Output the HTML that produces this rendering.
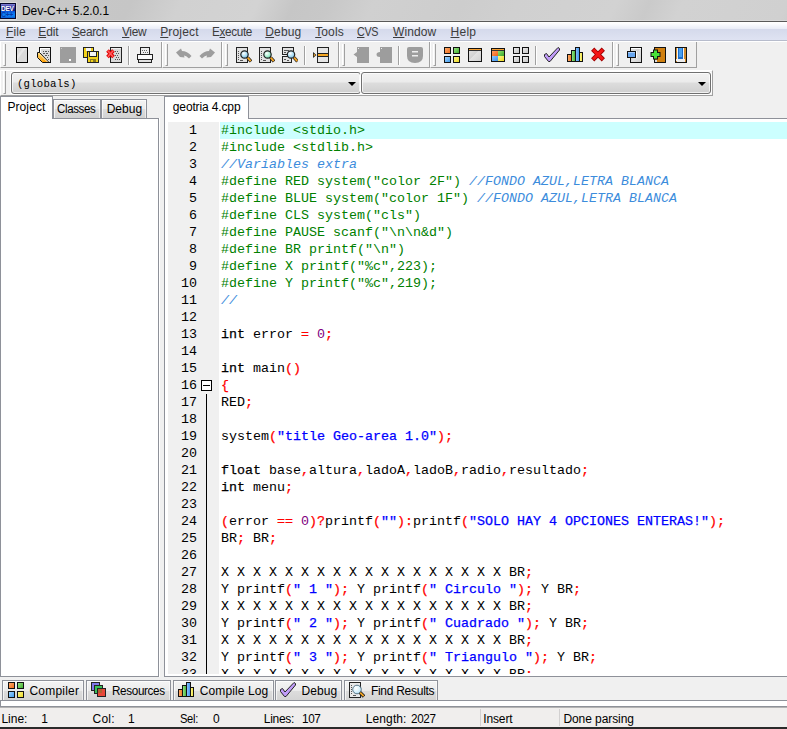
<!DOCTYPE html>
<html><head><meta charset="utf-8"><title>Dev-C++ 5.2.0.1</title>
<style>
*{box-sizing:border-box;margin:0;padding:0}
html,body{width:787px;height:729px;overflow:hidden;background:#f0f0f0}
body{position:relative;font-family:"Liberation Sans",sans-serif;font-size:12px;color:#000}
.abs{position:absolute}
.lb{position:absolute;white-space:nowrap;line-height:14px;height:14px;font-size:12px;transform-origin:0 0}
.lb u{text-decoration:underline;text-underline-offset:1px;text-decoration-thickness:1px}
#titlebar{position:absolute;left:0;top:0;width:787px;height:21px;background:linear-gradient(115deg,#c9c9c9 0px,#c6c6c6 120px,#d1d1d1 165px,#d3d3d3 235px,#c6c6c6 268px,#c8c8c8 300px,#d0d0d0 340px,#cdcdcd 420px,#d0d0d0 470px,#d2d2d2 560px,#cacaca 590px,#d2d2d2 620px,#d0d0d0 715px,#c4c4c4 755px,#c6c6c6 790px)}
#logo{position:absolute;left:0;top:3px;width:16px;height:16px;background:linear-gradient(#8a88d8 0,#4a4cb0 2px,#1a2488 5px,#101870 7px);border:1px solid #06082e;overflow:hidden;box-shadow:0 0 0 1px rgba(255,255,255,0.350)}
#logo span{position:absolute;left:0px;top:1px;font-size:6.500px;font-weight:bold;color:#fff;line-height:7px;letter-spacing:-0.300px}
#logo i{position:absolute;left:0px;top:7px;width:14px;height:7px;background:linear-gradient(#0a50d8 0,#0c80f4 3px,#0c80f4 5px,#0a58d0 7px);font-style:normal;font-size:7px;line-height:7px;color:#0838a8;font-weight:bold;letter-spacing:-0.500px}
#tline0{position:absolute;left:0;top:20px;width:787px;height:1px;background:#d9d9d9}
#tline{position:absolute;left:0;top:21px;width:787px;height:1px;background:#5a5a5a}
#menu{position:absolute;left:0;top:22px;width:787px;height:20px;background:linear-gradient(#ffffff 0,#ffffff 1px,#fbfcfe 2px,#e9ecf7 7px,#d5daec 7.500px,#dfe3f2 18px,#b7bccc 18px,#b7bccc 19px,#ffffff 19px,#ffffff 20px)}
.ic{position:absolute;width:16px;height:16px;line-height:0}
.tbox{position:absolute;border-right:1px solid #a0a0a0;border-bottom:1px solid #a0a0a0;border-left:1px solid #fff}
.grip{position:absolute;width:3px;border-left:1px solid #fff;border-right:1px solid #a0a0a0;border-bottom:1px solid #a0a0a0}
.vsep{position:absolute;width:2px;border-left:1px solid #a0a0a0;border-right:1px solid #fff}
.combo{position:absolute;height:22px;border:1px solid #707070;border-radius:3px;background:linear-gradient(#f2f2f2 0,#ebebeb 9px,#dddddd 10px,#cfcfcf 100%);box-shadow:inset 0 0 0 1px rgba(255,255,255,0.700),0 0 0 1px #fff;font-family:"Liberation Mono",monospace;font-size:10.667px;line-height:22px;padding-left:5px;letter-spacing:0.220px}
.combo:after{content:"";position:absolute;right:4px;top:9px;border:4px solid transparent;border-top:4px solid #000;border-bottom:0}
.tab{position:absolute;border:1px solid #8e9199;border-bottom:0;background:linear-gradient(#f4f4f4 0,#ebebeb 50%,#dddddd 51%,#d2d2d2 100%);box-shadow:inset 1px 1px 0 rgba(255,255,255,0.700),inset -1px 0 0 rgba(255,255,255,0.500)}
.tab.sel{background:#fff}
#left{position:absolute;left:0;top:118px;width:159px;height:559px;background:#fff;border:1px solid #8e9199;box-shadow:1px 0 0 #fff}
#edwrap{position:absolute;left:164px;top:118px;width:640px;height:559px;background:#fff;border:1px solid #8e9199}
#gutter{position:absolute;left:168px;top:122px;width:51px;height:552px;background:#f0f0f0;overflow:hidden}
#nums{position:absolute;left:168px;top:122px;width:29px;height:552px;overflow:hidden;text-align:right;font-family:"Liberation Mono",monospace;font-size:13.333px;line-height:17px}
#code{position:absolute;left:220px;top:122px;width:567px;height:552px;overflow:hidden;font-family:"Liberation Mono",monospace;font-size:13.333px;line-height:17px;white-space:pre;padding-left:1px}
#hl{position:absolute;left:220px;top:122px;width:567px;height:17px;background:#ccffff}
.ln{height:17px}
.p{color:#008000}
.c{color:#3c8cdc;font-style:italic}
.k{-webkit-text-stroke:0.250px #000}
.s{color:#0000ff;-webkit-text-stroke:0.250px #0000ff}
.y{color:#ff0000;-webkit-text-stroke:0.250px #ff0000}
.n{color:#800080}
#fold{position:absolute;left:201px;top:380px;width:11px;height:11px;border:1px solid #000;background:#fff}
#fold:after{content:"";position:absolute;left:1px;top:4px;width:7px;height:1px;background:#000}
#foldline{position:absolute;left:206px;top:394px;width:1px;height:280px;background:#000}
.btab{position:absolute;top:680px;height:20px;border:1px solid #8e9199;border-bottom:0;background:linear-gradient(#f4f4f4 0,#ebebeb 50%,#dddddd 51%,#d4d4d4 100%);box-shadow:inset 1px 1px 0 rgba(255,255,255,0.700),inset -1px 0 0 rgba(255,255,255,0.500)}
#bl1{position:absolute;left:0;top:700px;width:787px;height:1px;background:#8e9199}
#bw{position:absolute;left:0;top:701px;width:787px;height:5px;background:#fff;border-left:1px solid #8e9199}
#bl2{position:absolute;left:0;top:706px;width:787px;height:1px;background:#8e9199}
#bl3{position:absolute;left:0;top:707px;width:787px;height:1px;background:#b4b4b4}
#status{position:absolute;left:0;top:708px;width:787px;height:19px;background:#f0eeed}
#bot{position:absolute;left:0;top:727px;width:787px;height:2px;background:#2a2a2a}
.ssep{position:absolute;top:709px;width:1px;height:17px;background:#d2d0d0}
</style></head><body>
<div id="titlebar"><div id="logo"><span>DEV</span><i>C++</i></div></div>
<div id="tline0"></div><div id="tline"></div>
<div id="menu"></div>
<div class="tbox" style="left:0px;top:42px;width:162px;height:26px"></div><div class="grip" style="left:3px;top:44px;height:22px"></div><div class="tbox" style="left:162px;top:42px;width:60px;height:26px"></div><div class="grip" style="left:165px;top:44px;height:22px"></div><div class="tbox" style="left:222px;top:42px;width:117px;height:26px"></div><div class="grip" style="left:225px;top:44px;height:22px"></div><div class="tbox" style="left:339px;top:42px;width:91px;height:26px"></div><div class="grip" style="left:342px;top:44px;height:22px"></div><div class="tbox" style="left:430px;top:42px;width:183px;height:26px"></div><div class="grip" style="left:433px;top:44px;height:22px"></div><div class="tbox" style="left:613px;top:42px;width:84px;height:26px"></div><div class="grip" style="left:616px;top:44px;height:22px"></div><div class="vsep" style="left:128px;top:46px;height:19px"></div><div class="vsep" style="left:304px;top:46px;height:19px"></div><div class="vsep" style="left:398px;top:46px;height:19px"></div><div class="vsep" style="left:535px;top:46px;height:19px"></div>
<div class="ic" style="left:14px;top:47px"><svg width="16" height="16" viewBox="0 0 16 16" shape-rendering="crispEdges"><rect x="2.500" y="0.500" width="11" height="15" fill="#d9d9d9" stroke="#000"/><path d="M3 9 L9 1 L12 1 L3 13Z" fill="#e6e6e6" shape-rendering="auto"/></svg></div><div class="ic" style="left:37px;top:47px"><svg width="16" height="16" viewBox="0 0 16 16" shape-rendering="crispEdges"><defs><linearGradient id="og" x1="0" y1="0" x2="0.600" y2="1"><stop offset="0" stop-color="#ffd870"/><stop offset="1" stop-color="#ff9c00"/></linearGradient></defs><path d="M2.500 5.500 V0.500 H13.500 V15.500 H10" fill="#dcdcdc" stroke="#111"/><rect x="3" y="1" width="10" height="1" fill="#fff"/><rect x="3" y="1" width="1" height="5" fill="#fff"/><path d="M6 4h1M8 4h2M11 4h1M6 6h2M9 6h2M8 8h2M11 8h1M10 10h1M11 12h1" stroke="#555" fill="none"/><path d="M0.500 5.500 H2.500 L12 15.500 H5.500 L0.500 10.500 Z" fill="url(#og)" stroke="#111" shape-rendering="auto"/><path d="M2 6.500 L10.500 15" stroke="#fff3c8" stroke-width="1" shape-rendering="auto"/></svg></div><div class="ic" style="left:60px;top:47px"><svg width="16" height="16" viewBox="0 0 16 16" shape-rendering="crispEdges"><rect x="0" y="0" width="16" height="16" fill="#9d9d9d"/><rect x="9" y="12" width="2" height="2" fill="#fff"/><rect x="1" y="1" width="1" height="1" fill="#c8c8c8"/></svg></div><div class="ic" style="left:83px;top:47px"><svg width="16" height="16" viewBox="0 0 16 16" shape-rendering="crispEdges"><rect x="0.500" y="0.500" width="10" height="10" fill="#f2d21c" stroke="#222"/><rect x="3" y="1" width="5" height="3" fill="#f4f4f4"/><rect x="4.500" y="4.500" width="11" height="11" fill="#f2d21c" stroke="#222"/><rect x="6.500" y="4.500" width="7" height="5" fill="#f4f4f4" stroke="#222"/><rect x="7" y="12" width="6" height="3" fill="#8a7a20"/><rect x="8" y="13" width="2" height="2" fill="#f2d21c"/></svg></div><div class="ic" style="left:106px;top:47px"><svg width="16" height="16" viewBox="0 0 16 16" shape-rendering="crispEdges"><rect x="4.500" y="0.500" width="11" height="15" fill="#d9d9d9" stroke="#222"/><rect x="5" y="1" width="10" height="1" fill="#f0f0f0"/><path d="M9 4h1M11 4h1M10 6h1M12 6h1M9 8h1M11 8h1M10 10h1M12 10h1M9 12h1M11 12h1M13 12h1" stroke="#555"/><path d="M1.500 3.500 L7.500 10 M7.500 3.500 L1.500 10" stroke="#e00000" stroke-width="3.600" shape-rendering="auto"/><path d="M1.800 3.800 L7.200 9.700 M7.200 3.800 L1.800 9.700" stroke="#ff5a5a" stroke-width="1.600" shape-rendering="auto"/></svg></div><div class="ic" style="left:137px;top:47px"><svg width="16" height="16" viewBox="0 0 16 16" shape-rendering="crispEdges"><rect x="3.500" y="0.500" width="9" height="7" fill="#ececec" stroke="#222"/><path d="M5 3h1M7 3h1M9 3h1M6 5h1M8 5h1M10 5h1" stroke="#666"/><rect x="0.500" y="7.500" width="15" height="5" fill="#fafafa" stroke="#222"/><rect x="1.500" y="12.500" width="13" height="3" fill="#e0e0e0" stroke="#222"/></svg></div><div class="ic" style="left:176px;top:47px"><svg width="16" height="16" viewBox="0 0 16 16" shape-rendering="crispEdges"><path d="M0 5.500 L5 1.500 L6 4 Q11 4 15.500 9 L13 11.500 Q10 8.500 8 8.500 L8.500 10.500 L4 10 Z" fill="#9d9d9d" shape-rendering="auto"/></svg></div><div class="ic" style="left:199px;top:47px"><svg width="16" height="16" viewBox="0 0 16 16" shape-rendering="crispEdges"><path d="M16 5.500 L11 1.500 L10 4 Q5 4 0.500 9 L3 11.500 Q6 8.500 8 8.500 L7.500 10.500 L12 10 Z" fill="#9d9d9d" shape-rendering="auto"/></svg></div><div class="ic" style="left:236px;top:47px"><svg width="16" height="16" viewBox="0 0 16 16" shape-rendering="crispEdges"><defs><radialGradient id="l1" cx="0.4" cy="0.35" r="0.7"><stop offset="0" stop-color="#ffffff"/><stop offset="0.6" stop-color="#a8dcf4"/><stop offset="1" stop-color="#6fb6dc"/></radialGradient></defs><rect x="0.500" y="0.500" width="11" height="15" fill="#e2e2e2" stroke="#222"/><path d="M2 4h1M2 6h1M2 8h1M2 10h1M2 12h1M4 13h3" stroke="#555"/><circle cx="8.500" cy="7.500" r="3.700" fill="url(#l1)" stroke="#222" stroke-width="1.200" shape-rendering="auto"/><path d="M11.500 10.500 L15 14.500" stroke="#222" stroke-width="3.400" shape-rendering="auto"/><path d="M11.700 10.700 L14.700 14.200" stroke="#f5a623" stroke-width="1.800" shape-rendering="auto"/></svg></div><div class="ic" style="left:259px;top:47px"><svg width="16" height="16" viewBox="0 0 16 16" shape-rendering="crispEdges"><defs><radialGradient id="l2" cx="0.4" cy="0.35" r="0.7"><stop offset="0" stop-color="#ffffff"/><stop offset="0.6" stop-color="#a6efd0"/><stop offset="1" stop-color="#66c8a0"/></radialGradient></defs><rect x="0.500" y="0.500" width="11" height="15" fill="#e2e2e2" stroke="#222"/><path d="M2 4h1M2 6h1M2 8h1M2 10h1M2 12h1M4 13h3" stroke="#555"/><circle cx="8.500" cy="7.500" r="3.700" fill="url(#l2)" stroke="#222" stroke-width="1.200" shape-rendering="auto"/><path d="M11.500 10.500 L15 14.500" stroke="#222" stroke-width="3.400" shape-rendering="auto"/><path d="M11.700 10.700 L14.700 14.200" stroke="#f5a623" stroke-width="1.800" shape-rendering="auto"/></svg></div><div class="ic" style="left:282px;top:47px"><svg width="16" height="16" viewBox="0 0 16 16" shape-rendering="crispEdges"><defs><radialGradient id="l3" cx="0.4" cy="0.35" r="0.7"><stop offset="0" stop-color="#ffffff"/><stop offset="0.6" stop-color="#a8dcf4"/><stop offset="1" stop-color="#6fb6dc"/></radialGradient></defs><path d="M0.500 0.500 H11.500 V7.500 H0.500Z M0.500 9.500 H9.500 V15.500 H0.500Z" fill="#e2e2e2" stroke="#222"/><path d="M2 3h5M2 5h2M2 12h2M5 13h2" stroke="#555"/><circle cx="9" cy="7.500" r="3.700" fill="url(#l3)" stroke="#222" stroke-width="1.200" shape-rendering="auto"/><path d="M12 10.500 L15.500 14.500" stroke="#222" stroke-width="3.400" shape-rendering="auto"/><path d="M12.200 10.700 L15.200 14.200" stroke="#f5a623" stroke-width="1.800" shape-rendering="auto"/></svg></div><div class="ic" style="left:313px;top:47px"><svg width="16" height="16" viewBox="0 0 16 16" shape-rendering="crispEdges"><path d="M0 5 L3.500 8 L0 11 Z" fill="#222" shape-rendering="auto"/><path d="M0.800 6.500 L2.500 8 L0.800 9.500Z" fill="#f5a623" shape-rendering="auto"/><rect x="4.500" y="0.500" width="11" height="15" fill="#e4e4e4" stroke="#222"/><rect x="5" y="7" width="10" height="2" fill="#f5a623"/><path d="M5 6.500h10M5 9.500h10" stroke="#222"/></svg></div><div class="ic" style="left:353px;top:47px"><svg width="16" height="16" viewBox="0 0 16 16" shape-rendering="crispEdges"><path d="M4 0 H16 V16 H4 V10 L0.500 7.500 L4 5 Z" fill="#9d9d9d" shape-rendering="auto"/><rect x="5" y="1" width="1" height="1" fill="#eee"/></svg></div><div class="ic" style="left:376px;top:47px"><svg width="16" height="16" viewBox="0 0 16 16" shape-rendering="crispEdges"><path d="M4 0 H16 V16 H4 V10 Q0.500 10 0.500 7.500 Q0.500 5 4 5 Z" fill="#9d9d9d" shape-rendering="auto"/><rect x="5" y="1" width="1" height="1" fill="#eee"/></svg></div><div class="ic" style="left:407px;top:47px"><svg width="16" height="16" viewBox="0 0 16 16" shape-rendering="crispEdges"><path d="M0 2 Q0 0 2 0 L14 0 Q16 0 16 2 L16 9 Q16 16 8 16 Q0 16 0 9 Z" fill="#9d9d9d" shape-rendering="auto"/><rect x="5" y="4" width="6" height="1.500" fill="#eee" shape-rendering="auto"/><rect x="5" y="8" width="6" height="1.500" fill="#eee" shape-rendering="auto"/></svg></div><div class="ic" style="left:444px;top:47px"><svg width="16" height="16" viewBox="0 0 16 16" shape-rendering="crispEdges"><defs><linearGradient id="q0ffb070" x1="0" y1="0" x2="1" y2="1"><stop offset="0" stop-color="#ffb070"/><stop offset="1" stop-color="#f06a18"/></linearGradient><linearGradient id="q1a0e888" x1="0" y1="0" x2="1" y2="1"><stop offset="0" stop-color="#a0e888"/><stop offset="1" stop-color="#38a828"/></linearGradient><linearGradient id="q2a8d8ff" x1="0" y1="0" x2="1" y2="1"><stop offset="0" stop-color="#a8d8ff"/><stop offset="1" stop-color="#3c98ec"/></linearGradient><linearGradient id="q3fff890" x1="0" y1="0" x2="1" y2="1"><stop offset="0" stop-color="#fff890"/><stop offset="1" stop-color="#ecd820"/></linearGradient></defs><rect x="0.500" y="0.500" width="6" height="6" fill="url(#q0ffb070)" stroke="#111"/><rect x="9.500" y="0.500" width="6" height="6" fill="url(#q1a0e888)" stroke="#111"/><rect x="0.500" y="9.500" width="6" height="6" fill="url(#q2a8d8ff)" stroke="#111"/><rect x="9.500" y="9.500" width="6" height="6" fill="url(#q3fff890)" stroke="#111"/></svg></div><div class="ic" style="left:467px;top:47px"><svg width="16" height="16" viewBox="0 0 16 16" shape-rendering="crispEdges"><defs><linearGradient id="gg" x1="0" y1="0" x2="1" y2="1"><stop offset="0" stop-color="#e6e6e6"/><stop offset="0.45" stop-color="#d2d2d2"/><stop offset="0.5" stop-color="#e2e2e2"/><stop offset="1" stop-color="#cfcfcf"/></linearGradient></defs><rect x="1.500" y="1.500" width="13" height="13" fill="url(#gg)" stroke="#111"/><rect x="2" y="2" width="12" height="1" fill="#f8a030"/><rect x="2" y="3" width="12" height="1" fill="#333"/></svg></div><div class="ic" style="left:490px;top:47px"><svg width="16" height="16" viewBox="0 0 16 16" shape-rendering="crispEdges"><defs><linearGradient id="c1" x1="0" y1="0" x2="1" y2="1"><stop offset="0" stop-color="#ffa060"/><stop offset="1" stop-color="#f06018"/></linearGradient><linearGradient id="c2" x1="0" y1="0" x2="1" y2="1"><stop offset="0" stop-color="#90e070"/><stop offset="1" stop-color="#38a828"/></linearGradient><linearGradient id="c3" x1="0" y1="0" x2="1" y2="1"><stop offset="0" stop-color="#90c8ff"/><stop offset="1" stop-color="#3c90ec"/></linearGradient><linearGradient id="c4" x1="0" y1="0" x2="1" y2="1"><stop offset="0" stop-color="#fff890"/><stop offset="1" stop-color="#ecd820"/></linearGradient></defs><rect x="1.500" y="1.500" width="13" height="13" fill="#e0e0e0" stroke="#111"/><rect x="2" y="2" width="12" height="1" fill="#f8a030"/><rect x="2" y="3" width="12" height="1" fill="#333"/><rect x="2" y="4" width="6" height="5" fill="url(#c1)"/><rect x="8" y="4" width="6" height="5" fill="url(#c2)"/><rect x="2" y="9" width="6" height="5" fill="url(#c3)"/><rect x="8" y="9" width="6" height="5" fill="url(#c4)"/></svg></div><div class="ic" style="left:513px;top:47px"><svg width="16" height="16" viewBox="0 0 16 16" shape-rendering="crispEdges"><defs><linearGradient id="q0ececec" x1="0" y1="0" x2="1" y2="1"><stop offset="0" stop-color="#ececec"/><stop offset="1" stop-color="#c4c4c4"/></linearGradient><linearGradient id="q1ececec" x1="0" y1="0" x2="1" y2="1"><stop offset="0" stop-color="#ececec"/><stop offset="1" stop-color="#c4c4c4"/></linearGradient><linearGradient id="q2ececec" x1="0" y1="0" x2="1" y2="1"><stop offset="0" stop-color="#ececec"/><stop offset="1" stop-color="#c4c4c4"/></linearGradient><linearGradient id="q3ececec" x1="0" y1="0" x2="1" y2="1"><stop offset="0" stop-color="#ececec"/><stop offset="1" stop-color="#c4c4c4"/></linearGradient></defs><rect x="0.500" y="0.500" width="6" height="6" fill="url(#q0ececec)" stroke="#111"/><rect x="9.500" y="0.500" width="6" height="6" fill="url(#q1ececec)" stroke="#111"/><rect x="0.500" y="9.500" width="6" height="6" fill="url(#q2ececec)" stroke="#111"/><rect x="9.500" y="9.500" width="6" height="6" fill="url(#q3ececec)" stroke="#111"/></svg></div><div class="ic" style="left:544px;top:47px"><svg width="16" height="16" viewBox="0 0 16 16" shape-rendering="crispEdges"><path d="M0.500 7.500 L2.500 6.500 L5 10 L14 0.500 L15.500 1.500 L15.500 3 L6 14.500 L4.500 14.500 L0.500 9.500 Z" fill="#c09cf8" stroke="#222" stroke-width="1" shape-rendering="auto"/></svg></div><div class="ic" style="left:567px;top:47px"><svg width="16" height="16" viewBox="0 0 16 16" shape-rendering="crispEdges"><defs><linearGradient id="b1"><stop offset="0" stop-color="#ffb070"/><stop offset="1" stop-color="#f07820"/></linearGradient><linearGradient id="b2"><stop offset="0" stop-color="#a0e890"/><stop offset="1" stop-color="#40b030"/></linearGradient><linearGradient id="b3"><stop offset="0" stop-color="#90c8ff"/><stop offset="1" stop-color="#3c90ec"/></linearGradient><linearGradient id="b4"><stop offset="0" stop-color="#fffca0"/><stop offset="1" stop-color="#f0e030"/></linearGradient></defs><rect x="0.500" y="7.500" width="4" height="7" fill="url(#b1)" stroke="#111"/><rect x="4.500" y="3.500" width="4" height="11" fill="url(#b2)" stroke="#111"/><rect x="8.500" y="0.500" width="4" height="14" fill="url(#b3)" stroke="#111"/><rect x="12.500" y="5.500" width="3" height="9" fill="url(#b4)" stroke="#111"/></svg></div><div class="ic" style="left:590px;top:47px"><svg width="16" height="16" viewBox="0 0 16 16" shape-rendering="crispEdges"><path d="M4.300 3.800 L11.700 11.200 M11.700 3.800 L4.300 11.200" stroke="#a00000" stroke-width="4.600" stroke-linecap="square" shape-rendering="auto"/><path d="M4.300 3.800 L11.700 11.200 M11.700 3.800 L4.300 11.200" stroke="#f41414" stroke-width="3" stroke-linecap="square" shape-rendering="auto"/></svg></div><div class="ic" style="left:627px;top:47px"><svg width="16" height="16" viewBox="0 0 16 16" shape-rendering="crispEdges"><defs><linearGradient id="gg" x1="0" y1="0" x2="1" y2="1"><stop offset="0" stop-color="#e6e6e6"/><stop offset="0.45" stop-color="#d2d2d2"/><stop offset="0.5" stop-color="#e2e2e2"/><stop offset="1" stop-color="#cfcfcf"/></linearGradient></defs><path d="M3.500 4 V0.500 H14.500 V15.500 H3.500 V11" fill="url(#gg)" stroke="#111"/><rect x="4" y="1" width="10" height="1" fill="#fff"/><rect x="0.500" y="4.500" width="8" height="6" fill="#6aa8f0" stroke="#111"/><rect x="1" y="5" width="7" height="1" fill="#a8d0ff"/><rect x="9" y="4" width="1" height="7" fill="#fff"/></svg></div><div class="ic" style="left:650px;top:47px"><svg width="16" height="16" viewBox="0 0 16 16" shape-rendering="crispEdges"><rect x="4.500" y="0.500" width="11" height="15" fill="#d08010" stroke="#111"/><rect x="5" y="13" width="2" height="2" fill="#ddd"/><path d="M5.500 2.500 V12.500 M0.500 7.500 H10.500" stroke="#111" stroke-width="5" shape-rendering="auto"/><path d="M5.500 3.500 V11.500 M1.500 7.500 H9.500" stroke="#48e038" stroke-width="3" shape-rendering="auto"/></svg></div><div class="ic" style="left:673px;top:47px"><svg width="16" height="16" viewBox="0 0 16 16" shape-rendering="crispEdges"><rect x="2.500" y="0.500" width="11" height="15" fill="#d08a28" stroke="#111"/><path d="M3 12 Q3 15 6 15 H12 V12 Z" fill="#ececec"/><rect x="5" y="1" width="5" height="11" fill="#1c6cc8"/><rect x="6" y="1" width="3" height="9" fill="#48a0f0"/><rect x="4" y="1" width="1" height="13" fill="#f4f4f4"/><rect x="10" y="1" width="1" height="12" fill="#f4f4f4"/></svg></div>
<div class="tbox" style="left:0;top:70px;width:713px;height:26px;border-top:1px solid #fff"></div>
<div class="grip" style="left:3px;top:71px;height:23px"></div>
<div class="combo" style="left:11px;top:72px;width:350px">(globals)</div>
<div class="combo" style="left:361px;top:72px;width:350px"></div>

<div id="left"></div>
<div class="tab sel" style="left:0;top:96px;width:53px;height:23px"></div>
<div class="tab" style="left:53px;top:99px;width:48px;height:19px"></div>
<div class="tab" style="left:101px;top:99px;width:46px;height:19px"></div>

<div id="edwrap"></div>
<div class="tab sel" style="left:164px;top:96px;width:85px;height:23px"></div>
<div id="gutter"></div>
<div id="hl"></div>
<div id="nums"><div class="ln">1</div><div class="ln">2</div><div class="ln">3</div><div class="ln">4</div><div class="ln">5</div><div class="ln">6</div><div class="ln">7</div><div class="ln">8</div><div class="ln">9</div><div class="ln">10</div><div class="ln">11</div><div class="ln">12</div><div class="ln">13</div><div class="ln">14</div><div class="ln">15</div><div class="ln">16</div><div class="ln">17</div><div class="ln">18</div><div class="ln">19</div><div class="ln">20</div><div class="ln">21</div><div class="ln">22</div><div class="ln">23</div><div class="ln">24</div><div class="ln">25</div><div class="ln">26</div><div class="ln">27</div><div class="ln">28</div><div class="ln">29</div><div class="ln">30</div><div class="ln">31</div><div class="ln">32</div><div class="ln">33</div></div>
<div id="fold"></div><div id="foldline"></div>
<div id="code"><div class="ln"><span class="p">#include &lt;stdio.h&gt;</span></div><div class="ln"><span class="p">#include &lt;stdlib.h&gt;</span></div><div class="ln"><span class="c">//Variables extra</span></div><div class="ln"><span class="p">#define RED system("color 2F") </span><span class="c">//FONDO AZUL,LETRA BLANCA</span></div><div class="ln"><span class="p">#define BLUE system("color 1F") </span><span class="c">//FONDO AZUL,LETRA BLANCA</span></div><div class="ln"><span class="p">#define CLS system("cls")</span></div><div class="ln"><span class="p">#define PAUSE scanf("\n\n&amp;d")</span></div><div class="ln"><span class="p">#define BR printf("\n")</span></div><div class="ln"><span class="p">#define X printf("%c",223);</span></div><div class="ln"><span class="p">#define Y printf("%c",219);</span></div><div class="ln"><span class="c">//</span></div><div class="ln">&nbsp;</div><div class="ln"><span class="k">int</span> error <span class="y">=</span> <span class="n">0</span><span class="y">;</span></div><div class="ln">&nbsp;</div><div class="ln"><span class="k">int</span> main<span class="y">()</span></div><div class="ln"><span class="y">{</span></div><div class="ln">RED<span class="y">;</span></div><div class="ln">&nbsp;</div><div class="ln">system<span class="y">(</span><span class="s">"title Geo-area 1.0"</span><span class="y">);</span></div><div class="ln">&nbsp;</div><div class="ln"><span class="k">float</span> base<span class="y">,</span>altura<span class="y">,</span>ladoA<span class="y">,</span>ladoB<span class="y">,</span>radio<span class="y">,</span>resultado<span class="y">;</span></div><div class="ln"><span class="k">int</span> menu<span class="y">;</span></div><div class="ln">&nbsp;</div><div class="ln"><span class="y">(</span>error <span class="y">==</span> <span class="n">0</span><span class="y">)?</span>printf<span class="y">(</span><span class="s">""</span><span class="y">):</span>printf<span class="y">(</span><span class="s">"SOLO HAY 4 OPCIONES ENTERAS!"</span><span class="y">);</span></div><div class="ln">BR<span class="y">;</span> BR<span class="y">;</span></div><div class="ln">&nbsp;</div><div class="ln">X X X X X X X X X X X X X X X X X X BR<span class="y">;</span></div><div class="ln">Y printf<span class="y">(</span><span class="s">" 1 "</span><span class="y">);</span> Y printf<span class="y">(</span><span class="s">" Circulo "</span><span class="y">);</span> Y BR<span class="y">;</span></div><div class="ln">X X X X X X X X X X X X X X X X X X BR<span class="y">;</span></div><div class="ln">Y printf<span class="y">(</span><span class="s">" 2 "</span><span class="y">);</span> Y printf<span class="y">(</span><span class="s">" Cuadrado "</span><span class="y">);</span> Y BR<span class="y">;</span></div><div class="ln">X X X X X X X X X X X X X X X X X X BR<span class="y">;</span></div><div class="ln">Y printf<span class="y">(</span><span class="s">" 3 "</span><span class="y">);</span> Y printf<span class="y">(</span><span class="s">" Triangulo "</span><span class="y">);</span> Y BR<span class="y">;</span></div><div class="ln">X X X X X X X X X X X X X X X X X X BR<span class="y">;</span></div></div>
<div class="abs" style="left:0;top:677px;width:787px;height:23px;background:#f0f0f0"></div>

<div class="btab" style="left:2px;width:82px"></div><div class="ic" style="left:8px;top:682px"><svg width="16" height="16" viewBox="0 0 16 16" shape-rendering="crispEdges"><defs><linearGradient id="q0ffb070" x1="0" y1="0" x2="1" y2="1"><stop offset="0" stop-color="#ffb070"/><stop offset="1" stop-color="#f06a18"/></linearGradient><linearGradient id="q1a0e888" x1="0" y1="0" x2="1" y2="1"><stop offset="0" stop-color="#a0e888"/><stop offset="1" stop-color="#38a828"/></linearGradient><linearGradient id="q2a8d8ff" x1="0" y1="0" x2="1" y2="1"><stop offset="0" stop-color="#a8d8ff"/><stop offset="1" stop-color="#3c98ec"/></linearGradient><linearGradient id="q3fff890" x1="0" y1="0" x2="1" y2="1"><stop offset="0" stop-color="#fff890"/><stop offset="1" stop-color="#ecd820"/></linearGradient></defs><rect x="0.500" y="0.500" width="6" height="6" fill="url(#q0ffb070)" stroke="#111"/><rect x="9.500" y="0.500" width="6" height="6" fill="url(#q1a0e888)" stroke="#111"/><rect x="0.500" y="9.500" width="6" height="6" fill="url(#q2a8d8ff)" stroke="#111"/><rect x="9.500" y="9.500" width="6" height="6" fill="url(#q3fff890)" stroke="#111"/></svg></div>
<div class="btab" style="left:86px;width:85px"></div><div class="ic" style="left:91px;top:682px"><svg width="16" height="16" viewBox="0 0 16 16" shape-rendering="crispEdges"><rect x="0.500" y="0.500" width="8" height="8" fill="#8078e8" stroke="#222"/><rect x="3.500" y="3.500" width="8" height="8" fill="#38c058" stroke="#222"/><rect x="6.500" y="6.500" width="8" height="8" fill="#e84838" stroke="#222"/><rect x="7" y="7" width="4" height="4" fill="#b06030"/></svg></div>
<div class="btab" style="left:173px;width:101px"></div><div class="ic" style="left:178px;top:682px"><svg width="16" height="16" viewBox="0 0 16 16" shape-rendering="crispEdges"><defs><linearGradient id="b1"><stop offset="0" stop-color="#ffb070"/><stop offset="1" stop-color="#f07820"/></linearGradient><linearGradient id="b2"><stop offset="0" stop-color="#a0e890"/><stop offset="1" stop-color="#40b030"/></linearGradient><linearGradient id="b3"><stop offset="0" stop-color="#90c8ff"/><stop offset="1" stop-color="#3c90ec"/></linearGradient><linearGradient id="b4"><stop offset="0" stop-color="#fffca0"/><stop offset="1" stop-color="#f0e030"/></linearGradient></defs><rect x="0.500" y="7.500" width="4" height="7" fill="url(#b1)" stroke="#111"/><rect x="4.500" y="3.500" width="4" height="11" fill="url(#b2)" stroke="#111"/><rect x="8.500" y="0.500" width="4" height="14" fill="url(#b3)" stroke="#111"/><rect x="12.500" y="5.500" width="3" height="9" fill="url(#b4)" stroke="#111"/></svg></div>
<div class="btab" style="left:275px;width:67px"></div><div class="ic" style="left:280px;top:682px"><svg width="16" height="16" viewBox="0 0 16 16" shape-rendering="crispEdges"><path d="M0.500 7.500 L2.500 6.500 L5 10 L14 0.500 L15.500 1.500 L15.500 3 L6 14.500 L4.500 14.500 L0.500 9.500 Z" fill="#c09cf8" stroke="#222" stroke-width="1" shape-rendering="auto"/></svg></div>
<div class="btab" style="left:344px;width:94px"></div><div class="ic" style="left:349px;top:682px"><svg width="16" height="16" viewBox="0 0 16 16" shape-rendering="crispEdges"><defs><radialGradient id="l4" cx="0.4" cy="0.35" r="0.7"><stop offset="0" stop-color="#ffffff"/><stop offset="0.6" stop-color="#d8f0fa"/><stop offset="1" stop-color="#a8d4ea"/></radialGradient></defs><rect x="0.500" y="0.500" width="11" height="15" fill="#e8e8e8" stroke="#222"/><path d="M2 3h1M2 5h1M2 7h1M2 9h1M2 11h1M4 13h3" stroke="#555"/><circle cx="8" cy="7.500" r="4.300" fill="url(#l4)" stroke="#3a5a70" stroke-width="0.800" shape-rendering="auto"/><path d="M11 10.500 L15 14.500" stroke="#222" stroke-width="3.400" shape-rendering="auto"/><path d="M11.200 10.700 L14.700 14.200" stroke="#f5a623" stroke-width="1.800" shape-rendering="auto"/></svg></div>
<div id="bl1"></div><div id="bw"></div><div id="bl2"></div><div id="bl3"></div>
<div id="status"></div>
<div class="ssep" style="left:480px"></div><div class="ssep" style="left:559px"></div>
<div id="bot"></div>
<div class="lb" id="title" style="left:22.00px;top:4px;color:#000;letter-spacing:-0.071px;">Dev-C++ 5.2.0.1</div>
<div class="lb" id="m0" style="left:6.10px;top:25px;color:#3c3c3c;letter-spacing:0.100px;"><u>F</u>ile</div>
<div class="lb" id="m1" style="left:38.20px;top:25px;color:#3c3c3c;letter-spacing:-0.067px;"><u>E</u>dit</div>
<div class="lb" id="m2" style="left:72.20px;top:25px;color:#3c3c3c;letter-spacing:-0.350px;transform:scaleX(0.9956);"><u>S</u>earch</div>
<div class="lb" id="m3" style="left:122.00px;top:25px;color:#3c3c3c;letter-spacing:-0.350px;transform:scaleX(0.9900);"><u>V</u>iew</div>
<div class="lb" id="m4" style="left:160.20px;top:25px;color:#3c3c3c;letter-spacing:0.167px;"><u>P</u>roject</div>
<div class="lb" id="m5" style="left:211.62px;top:25px;color:#3c3c3c;letter-spacing:-0.350px;transform:scaleX(0.9774);">E<u>x</u>ecute</div>
<div class="lb" id="m6" style="left:265.30px;top:25px;color:#3c3c3c;letter-spacing:0.125px;"><u>D</u>ebug</div>
<div class="lb" id="m7" style="left:315.20px;top:25px;color:#3c3c3c;letter-spacing:0.125px;"><u>T</u>ools</div>
<div class="lb" id="m8" style="left:357.40px;top:25px;color:#3c3c3c;letter-spacing:-0.350px;transform:scaleX(0.8969);"><u>C</u>VS</div>
<div class="lb" id="m9" style="left:393.00px;top:25px;color:#3c3c3c;letter-spacing:0.120px;"><u>W</u>indow</div>
<div class="lb" id="m10" style="left:450.50px;top:25px;color:#3c3c3c;letter-spacing:0.267px;"><u>H</u>elp</div>
<div class="lb" id="t0" style="left:7.40px;top:100px;color:#000;letter-spacing:0.100px;">Project</div>
<div class="lb" id="t1" style="left:56.64px;top:102px;color:#000;letter-spacing:-0.350px;transform:scaleX(0.9563);">Classes</div>
<div class="lb" id="t2" style="left:106.70px;top:102px;color:#000;letter-spacing:-0.000px;">Debug</div>
<div class="lb" id="t3" style="left:172.80px;top:100px;color:#000;letter-spacing:-0.133px;">geotria 4.cpp</div>
<div class="lb" id="b0" style="left:29.50px;top:684px;color:#000;letter-spacing:0.200px;">Compiler</div>
<div class="lb" id="b1" style="left:112.43px;top:684px;color:#000;letter-spacing:-0.350px;transform:scaleX(0.9737);">Resources</div>
<div class="lb" id="b2" style="left:199.80px;top:684px;color:#000;letter-spacing:0.110px;">Compile Log</div>
<div class="lb" id="b3" style="left:301.60px;top:684px;color:#000;letter-spacing:0.025px;">Debug</div>
<div class="lb" id="b4" style="left:370.90px;top:684px;color:#000;letter-spacing:-0.273px;">Find Results</div>
<div class="lb" id="s0" style="left:1.40px;top:712px;color:#000;letter-spacing:0.000px;">Line:</div>
<div class="lb" id="s1" style="left:41.20px;top:712px;color:#000;letter-spacing:0.000px;">1</div>
<div class="lb" id="s2" style="left:92.50px;top:712px;color:#000;letter-spacing:0.233px;">Col:</div>
<div class="lb" id="s3" style="left:128.00px;top:712px;color:#000;letter-spacing:0.000px;">1</div>
<div class="lb" id="s4" style="left:179.57px;top:712px;color:#000;letter-spacing:-0.350px;transform:scaleX(0.9304);">Sel:</div>
<div class="lb" id="s5" style="left:213.00px;top:712px;color:#000;letter-spacing:0.000px;">0</div>
<div class="lb" id="s6" style="left:263.80px;top:712px;color:#000;letter-spacing:-0.300px;">Lines:</div>
<div class="lb" id="s7" style="left:301.62px;top:712px;color:#000;letter-spacing:-0.350px;transform:scaleX(0.9781);">107</div>
<div class="lb" id="s8" style="left:365.80px;top:712px;color:#000;letter-spacing:0.100px;">Length:</div>
<div class="lb" id="s9" style="left:411.03px;top:712px;color:#000;letter-spacing:-0.350px;transform:scaleX(0.9729);">2027</div>
<div class="lb" id="s10" style="left:483.20px;top:712px;color:#000;letter-spacing:-0.120px;">Insert</div>
<div class="lb" id="s11" style="left:563.40px;top:712px;color:#000;letter-spacing:-0.073px;">Done parsing</div>

</body></html>
